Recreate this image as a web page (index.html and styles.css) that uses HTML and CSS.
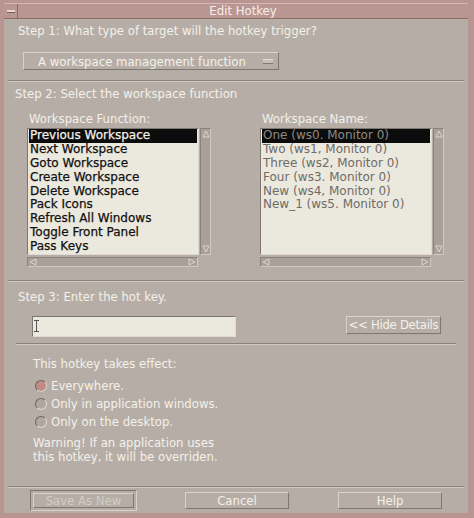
FILE: index.html
```html
<!DOCTYPE html>
<html>
<head>
<meta charset="utf-8">
<link rel="stylesheet" href="styles.css">
</head>
<body>
<div class="win">
  <div class="titlebar">
    <div class="menubtn"><span class="dash"></span></div>
    <div class="title">Edit Hotkey</div>
  </div>
  <div class="client">
    <div class="sec1">
      <div class="lbl step1">Step 1: What type of target will the hotkey trigger?</div>
      <div class="option">
        <span class="opttext">A workspace management function</span>
        <span class="optind"></span>
      </div>
    </div>
    <div class="sep"></div>
    <div class="sec2">
      <div class="lbl step2">Step 2: Select the workspace function</div>
      <div class="lists">
        <div class="col col-left">
          <div class="lbl listlbl">Workspace Function:</div>
          <div class="listwrap">
            <div class="listbox">
              <div class="item sel">Previous Workspace</div>
              <div class="item">Next Workspace</div>
              <div class="item">Goto Workspace</div>
              <div class="item">Create Workspace</div>
              <div class="item">Delete Workspace</div>
              <div class="item">Pack Icons</div>
              <div class="item">Refresh All Windows</div>
              <div class="item">Toggle Front Panel</div>
              <div class="item">Pass Keys</div>
            </div>
            <div class="vscroll">
              <svg class="arr" width="8" height="8" viewBox="0 0 8 8"><path d="M1 7 L4 1 L7 7 Z" fill="none" stroke="#ddd7d0" stroke-width="1"/></svg>
              <svg class="arr" width="8" height="8" viewBox="0 0 8 8"><path d="M1 1 L4 7 L7 1 Z" fill="none" stroke="#ddd7d0" stroke-width="1"/></svg>
            </div>
            <div class="hscroll">
              <svg class="arr" width="8" height="8" viewBox="0 0 8 8"><path d="M7 1 L1 4 L7 7 Z" fill="none" stroke="#ddd7d0" stroke-width="1"/></svg>
              <svg class="arr" width="8" height="8" viewBox="0 0 8 8"><path d="M1 1 L7 4 L1 7 Z" fill="none" stroke="#ddd7d0" stroke-width="1"/></svg>
            </div>
          </div>
        </div>
        <div class="col col-right">
          <div class="lbl listlbl">Workspace Name:</div>
          <div class="listwrap">
            <div class="listbox dim">
              <div class="item sel">One (ws0. Monitor 0)</div>
              <div class="item">Two (ws1, Monitor 0)</div>
              <div class="item">Three (ws2, Monitor 0)</div>
              <div class="item">Four (ws3. Monitor 0)</div>
              <div class="item">New (ws4, Monitor 0)</div>
              <div class="item">New_1 (ws5. Monitor 0)</div>
            </div>
            <div class="vscroll">
              <svg class="arr" width="8" height="8" viewBox="0 0 8 8"><path d="M1 7 L4 1 L7 7 Z" fill="none" stroke="#ddd7d0" stroke-width="1"/></svg>
              <svg class="arr" width="8" height="8" viewBox="0 0 8 8"><path d="M1 1 L4 7 L7 1 Z" fill="none" stroke="#ddd7d0" stroke-width="1"/></svg>
            </div>
            <div class="hscroll">
              <svg class="arr" width="8" height="8" viewBox="0 0 8 8"><path d="M7 1 L1 4 L7 7 Z" fill="none" stroke="#ddd7d0" stroke-width="1"/></svg>
              <svg class="arr" width="8" height="8" viewBox="0 0 8 8"><path d="M1 1 L7 4 L1 7 Z" fill="none" stroke="#ddd7d0" stroke-width="1"/></svg>
            </div>
          </div>
        </div>
      </div>
    </div>
    <div class="sep"></div>
    <div class="sec3">
      <div class="lbl step3">Step 3: Enter the hot key.</div>
      <div class="keyrow">
        <div class="textfield"><span class="ibeam"></span></div>
        <div class="btn hide">&lt;&lt; Hide Details</div>
      </div>
    </div>
    <div class="sep sep3"></div>
    <div class="sec4">
      <div class="lbl effect">This hotkey takes effect:</div>
      <div class="radio"><span class="rb on"></span><span class="lbl">Everywhere.</span></div>
      <div class="radio"><span class="rb"></span><span class="lbl">Only in application windows.</span></div>
      <div class="radio"><span class="rb"></span><span class="lbl">Only on the desktop.</span></div>
      <div class="lbl warn">Warning! If an application uses<br>this hotkey, it will be overriden.</div>
    </div>
    <div class="sep"></div>
    <div class="actions">
      <div class="defring"><div class="btn abtn insens">Save As New</div></div>
      <div class="btn abtn">Cancel</div>
      <div class="btn abtn">Help</div>
    </div>
  </div>
</div>
</body>
</html>
```
FILE: styles.css
```css
html, body {
  margin: 0;
  padding: 0;
  background: #b99591;
}
.win {
  width: 474px;
  height: 518px;
  box-sizing: border-box;
  padding: 3px 6px 5px 4px;
  background: #b99591;
  display: flex;
  flex-direction: column;
  font-family: "DejaVu Sans Condensed", "DejaVu Sans", sans-serif;
  font-size: 13px;
}
.titlebar {
  height: 16px;
  display: flex;
  box-sizing: border-box;
  border-top: 1px solid #d6b8b4;
  border-bottom: 1px solid #8e6a66;
  background: #ba9692;
}
.menubtn {
  width: 14px;
  box-sizing: border-box;
  border-right: 1px solid #8e6a66;
  display: flex;
  align-items: center;
  justify-content: center;
}
.dash {
  width: 8px;
  height: 2px;
  background: #e8d6d2;
  border-bottom: 1px solid #7d5a56;
}
.title {
  flex: 1;
  text-align: center;
  color: #f6eeea;
  line-height: 14px;
}
.client {
  flex: 1;
  background: #b6aea6;
  display: flex;
  flex-direction: column;
  color: #f4f0ea;
}
.lbl {
  line-height: 14px;
  white-space: nowrap;
}
.sec1 {
  height: 61px;
  padding: 5px 0 0 14px;
  box-sizing: border-box;
}
.option {
  margin: 14px 0 0 5px;
  width: 256px;
  height: 18px;
  box-sizing: border-box;
  border-top: 1px solid #d9d3cc;
  border-left: 1px solid #d9d3cc;
  border-right: 1px solid #7e7770;
  border-bottom: 1px solid #7e7770;
  display: flex;
  align-items: center;
  padding-left: 14px;
}
.opttext { flex: 1; }
.optind {
  width: 10px;
  height: 3px;
  margin-right: 5px;
  background: #c7c0b9;
  border-top: 1px solid #e0dad3;
  border-bottom: 1px solid #7e7770;
}
.sep {
  height: 0;
  border-top: 1px solid #8a837c;
  border-bottom: 1px solid #d0cac3;
  margin: 0 4px;
}
.sec2 {
  height: 198px;
  padding: 5px 0 0 11px;
  box-sizing: border-box;
}
.lists {
  display: flex;
  margin-top: 11px;
  padding-left: 12px;
  gap: 50px;
}
.col { width: 183px; }
.listlbl { padding-left: 2px; }
.listwrap {
  margin-top: 2px;
  display: grid;
  grid-template-columns: 172px 11px;
  grid-template-rows: 127px 12px;
  column-gap: 1px;
  row-gap: 2px;
}
.listbox {
  background: #ebe8de;
  box-sizing: border-box;
  border-top: 1px solid #7e7770;
  border-left: 1px solid #7e7770;
  border-right: 1px solid #e0dad3;
  border-bottom: 1px solid #e0dad3;
  padding: 0 1px;
  color: #111;
  font-family: "DejaVu Sans", sans-serif;
  font-size: 12px;
  -webkit-text-stroke: 0.25px #111;
  overflow: hidden;
}
.item {
  line-height: 13.9px;
  height: 13.9px;
  padding-left: 1px;
  white-space: nowrap;
}
.item.sel {
  background: #0c0c0c;
  color: #f2f0ea;
  -webkit-text-stroke: 0.25px #f2f0ea;
}
.listbox.dim {
  color: #6f6c68;
  -webkit-text-stroke: 0;
}
.listbox.dim .item.sel { color: #8d8a86; -webkit-text-stroke: 0; }
.vscroll {
  box-sizing: border-box;
  background: #a9a199;
  border: 1px solid #8a837c;
  border-right-color: #d0cac3;
  border-bottom-color: #d0cac3;
  display: flex;
  flex-direction: column;
  justify-content: space-between;
  align-items: center;
  padding: 1px 0;
}
.hscroll {
  box-sizing: border-box;
  background: #a9a199;
  border: 1px solid #8a837c;
  border-right-color: #d0cac3;
  border-bottom-color: #d0cac3;
  display: flex;
  justify-content: space-between;
  align-items: center;
  padding: 0 1px;
  height: 10px;
  width: 171px;
}
.arr { display: block; }
.sec3 {
  height: 61px;
  padding: 8px 0 0 14px;
  box-sizing: border-box;
}
.keyrow {
  display: flex;
  align-items: flex-start;
  margin-top: 12px;
  padding-left: 14px;
}
.textfield {
  width: 204px;
  height: 21px;
  box-sizing: border-box;
  background: #ebe8de;
  border-top: 1px solid #7e7770;
  border-left: 1px solid #7e7770;
  border-right: 1px solid #e0dad3;
  border-bottom: 1px solid #e0dad3;
  position: relative;
}
.ibeam {
  position: absolute;
  left: 1px;
  top: 3px;
  width: 5px;
  height: 12px;
  border-top: 1px solid #555;
  border-bottom: 1px solid #555;
  box-sizing: border-box;
}
.ibeam::after {
  content: "";
  position: absolute;
  left: 2px;
  top: 0;
  width: 1px;
  height: 10px;
  background: #555;
}
.btn {
  box-sizing: border-box;
  border-top: 1px solid #d9d3cc;
  border-left: 1px solid #d9d3cc;
  border-right: 1px solid #7e7770;
  border-bottom: 1px solid #7e7770;
  text-align: center;
  color: #f4f0ea;
  white-space: nowrap;
}
.hide {
  margin-left: 110px;
  width: 95px;
  height: 18px;
  line-height: 16px;
  letter-spacing: -0.3px;
}
.sep3 { margin: 0 12px 0 12px; }
.sec4 {
  height: 141px;
  padding: 12px 0 0 29px;
  box-sizing: border-box;
}
.effect { margin-bottom: 6px; }
.radio {
  height: 18px;
  display: flex;
  align-items: center;
}
.rb {
  width: 12px;
  height: 12px;
  box-sizing: border-box;
  border-radius: 50%;
  margin: 0 4px 0 2px;
  border: 1px solid #e0dad3;
  border-top-color: #6a645e;
  border-left-color: #6a645e;
  background: #b0a8a0;
}
.rb.on {
  background: #c28b85;
  border-color: #6a645e #d9d3cc #d9d3cc #6a645e;
}
.warn { margin-top: 5px; }
.actions {
  flex: 1;
  display: flex;
  align-items: center;
  padding: 0 0 0 26px;
}
.defring {
  border: 1px solid #7e7770;
  border-right-color: #d9d3cc;
  border-bottom-color: #d9d3cc;
  padding: 2px;
  margin-right: 48px;
}
.abtn {
  width: 104px;
  height: 17px;
  line-height: 15px;
}
.abtn.insens { width: 101px; height: 15px; line-height: 13px; color: #d2ccc5; }
.actions > .abtn + .abtn { margin-left: 49px; }
```
